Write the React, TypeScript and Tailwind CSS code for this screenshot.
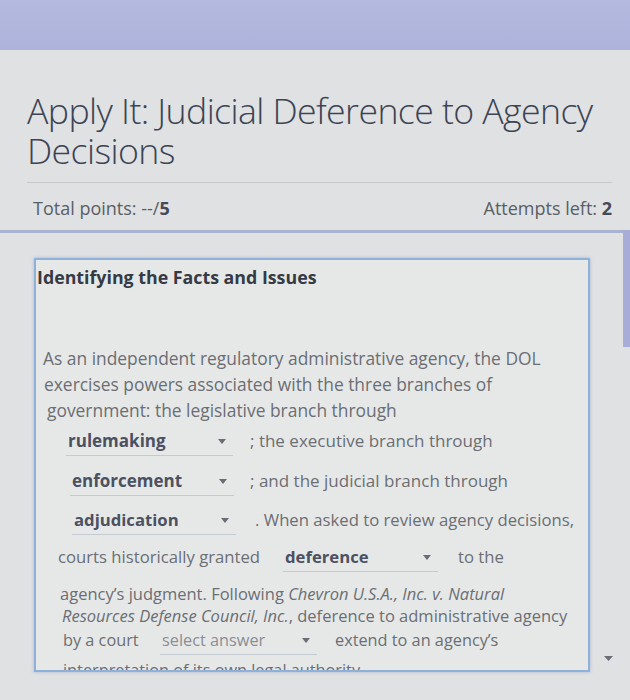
import { ReactNode } from 'react'

function Select({ value, width, placeholder = false }: { value: string; width: number; placeholder?: boolean }) {
  return (
    <span className="relative flex h-[22px] shrink-0 items-center justify-between pl-[2px] pr-[7px]" style={{ width }}>
      <span className={placeholder ? 'font-normal text-[#8b8e93]' : 'font-bold text-[#4c5161]'}>{value}</span>
      <svg width="8" height="5" viewBox="0 0 8 5" className="shrink-0">
        <path d="M0 0 L8 0 L4 5 Z" fill="#6a6d73" />
      </svg>
      <span className="absolute left-0 right-0 -bottom-[4px] h-px bg-[#c4cad1]" />
    </span>
  )
}

function Row({ children, className = '' }: { children: ReactNode; className?: string }) {
  return <div className={'flex h-[22px] items-center whitespace-nowrap ' + className}>{children}</div>
}

export default function App() {
  return (
    <div
      className="relative w-[630px] h-[700px] overflow-hidden bg-[#dfe1e2] text-[#6b6e73]"
      style={{ fontFamily: '"Open Sans", "Noto Sans", sans-serif' }}
    >
      <div className="h-[50px] bg-gradient-to-b from-[#b4b9df] to-[#adb3db]" />

      <div className="pl-[27px] pr-[18px] pt-[40px]">
        <h1 className="text-[35.7px] leading-[40px] font-light tracking-[-0.6px] text-[#3c4353]">
          Apply It: Judicial Deference to Agency
          <br />
          Decisions
        </h1>
        <div className="mt-[12px] h-px bg-[#c6c9ca]" />
        <div className="mt-[13px] flex h-[24px] items-center justify-between pl-[6px] text-[18px] text-[#5a5e66]">
          <span>
            Total points: --/<span className="font-bold text-[#454a57]">5</span>
          </span>
          <span>
            Attempts left: <span className="font-bold text-[#454a57]">2</span>
          </span>
        </div>
      </div>

      <div className="mt-[10px] h-[3px] bg-[#a9b2cf]" />

      {/* scrollbar */}
      <div className="absolute right-0 top-[230px] w-[7px] h-[117px] bg-[#a7add6]" />
      <svg width="9" height="5" viewBox="0 0 9 5" className="absolute left-[604px] top-[656px]">
        <path d="M0 0 L9 0 L4.5 5 Z" fill="#6a6d76" />
      </svg>

      <div className="ml-[34px] mt-[25px] w-[556px] h-[414px] overflow-hidden border-2 border-[#8eb0d9] bg-[#e6e8e8] shadow-[0_0_3px_rgba(120,150,200,0.5)]">
        <h2 className="pl-[1px] pt-[6px] text-[17.8px] font-bold leading-[22px] text-[#353a45]">
          Identifying the Facts and Issues
        </h2>

        <div className="pt-[59px]">
          <div className="text-[17.4px]">
            <Row className="ml-[7px]">As an independent regulatory administrative agency, the DOL</Row>
            <Row className="ml-[8px] mt-[4px]">exercises powers associated with the three branches of</Row>
            <Row className="ml-[11px] mt-[4px]">government: the legislative branch through</Row>
          </div>
          <div className="text-[17px]">
            <Row className="ml-[30px] mt-[9px]">
              <Select value="rulemaking" width={167} />
              <span className="ml-[17px]">; the executive branch through</span>
            </Row>
            <Row className="ml-[34px] mt-[18px]">
              <Select value="enforcement" width={164} />
              <span className="ml-[16px]">; and the judicial branch through</span>
            </Row>
          </div>
          <div className="text-[16.7px]">
            <Row className="ml-[36px] mt-[17px]">
              <Select value="adjudication" width={164} />
              <span className="ml-[19px]">. When asked to review agency decisions,</span>
            </Row>
            <Row className="ml-[22px] mt-[15px]">
              <span className="w-[225px] shrink-0">courts historically granted</span>
              <Select value="deference" width={155} />
              <span className="ml-[20px]">to the</span>
            </Row>
          </div>
          <div className="text-[16.5px]">
            <Row className="ml-[24px] mt-[15px]">
              agency’s judgment. Following&nbsp;<i>Chevron U.S.A., Inc. v. Natural</i>
            </Row>
            <Row className="ml-[26px]">
              <i>Resources Defense Council, Inc.</i>, deference to administrative agency
            </Row>
          </div>
          <div className="text-[16.3px]">
            <Row className="ml-[27px] mt-[2px]">
              <span className="w-[97px] shrink-0">by a court</span>
              <Select value="select answer" width={157} placeholder />
              <span className="ml-[18px]">extend to an agency’s</span>
            </Row>
            <Row className="ml-[27px] mt-[8px]">interpretation of its own legal authority.</Row>
          </div>
        </div>
      </div>
    </div>
  )
}
